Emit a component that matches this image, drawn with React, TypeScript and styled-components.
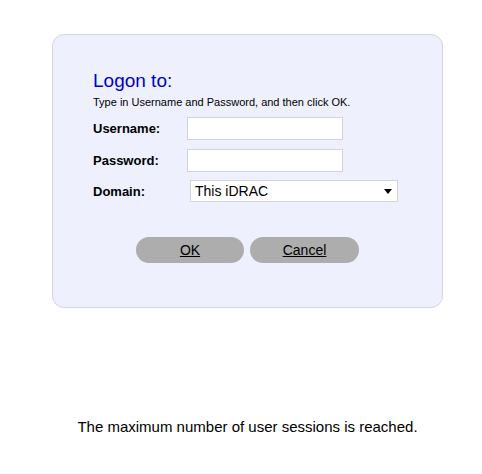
import React from "react";
import styled, { createGlobalStyle } from "styled-components";

const Global = createGlobalStyle`
  html, body { margin: 0; padding: 0; background: #ffffff; }
  body { font-family: "Liberation Sans", Arial, sans-serif; color: #000; }
`;

const Page = styled.div`
  width: 482px;
  height: 474px;
  padding: 34px 0 0 52px;
  box-sizing: border-box;
  display: flex;
  flex-direction: column;
`;

const Panel = styled.form`
  width: 391px;
  height: 274px;
  box-sizing: border-box;
  background: #eef1fd;
  border: 1px solid #d3d6de;
  border-radius: 12px;
  padding: 35px 0 0 40px;
  display: flex;
  flex-direction: column;
`;

const Title = styled.h1`
  margin: 0;
  font-size: 19px;
  font-weight: normal;
  line-height: 22px;
  color: #0000cc;
`;

const Hint = styled.p`
  margin: 4px 0 0;
  font-size: 11px;
  line-height: 13px;
`;

const Fields = styled.div`
  margin-top: 8px;
  display: grid;
  grid-template-columns: 94px auto;
  row-gap: 9px;
  align-items: center;
`;

const Label = styled.label`
  font-size: 13px;
  font-weight: bold;
`;

const TextInput = styled.input`
  width: 156px;
  height: 23px;
  box-sizing: border-box;
  border: 1px solid #d2d4d8;
  background: #ffffff;
  margin: 0;
  padding: 0 3px;
  font-family: inherit;
  font-size: 13px;
  outline: none;
`;

const SelectBox = styled.div`
  position: relative;
  margin-left: 3px;
  width: 208px;
  height: 22px;
  box-sizing: border-box;
  border: 1px solid #d2d4d8;
  background: #ffffff;
  display: flex;
  align-items: center;
  padding-left: 4px;
  font-size: 14px;
  margin-top: -1px;
`;

const Arrow = styled.span`
  position: absolute;
  right: 5px;
  top: 8px;
  width: 0;
  height: 0;
  border-left: 4px solid transparent;
  border-right: 4px solid transparent;
  border-top: 5px solid #000;
`;

const Buttons = styled.div`
  margin-top: 35px;
  margin-left: 43px;
  display: flex;
  gap: 6px;
`;

const PillButton = styled.button<{ $w: number }>`
  width: ${(p) => p.$w}px;
  height: 26px;
  border: none;
  border-radius: 13px;
  background: #adadad;
  color: #000;
  font-family: inherit;
  font-size: 14px;
  text-decoration: underline;
  padding: 0;
  cursor: pointer;
`;

const Message = styled.p`
  margin: 110px 0 0;
  width: 391px;
  text-align: center;
  font-size: 15px;
  line-height: 17px;
`;

export default function App() {
  return (
    <>
      <Global />
      <Page>
        <Panel onSubmit={(e) => e.preventDefault()}>
          <Title>Logon to:</Title>
          <Hint>Type in Username and Password, and then click OK.</Hint>
          <Fields>
            <Label htmlFor="u">Username:</Label>
            <TextInput id="u" type="text" />
            <Label htmlFor="p">Password:</Label>
            <TextInput id="p" type="password" />
            <Label>Domain:</Label>
            <SelectBox>
              This iDRAC
              <Arrow />
            </SelectBox>
          </Fields>
          <Buttons>
            <PillButton $w={108} type="submit">OK</PillButton>
            <PillButton $w={109} type="button">Cancel</PillButton>
          </Buttons>
        </Panel>
        <Message>The maximum number of user sessions is reached.</Message>
      </Page>
    </>
  );
}
